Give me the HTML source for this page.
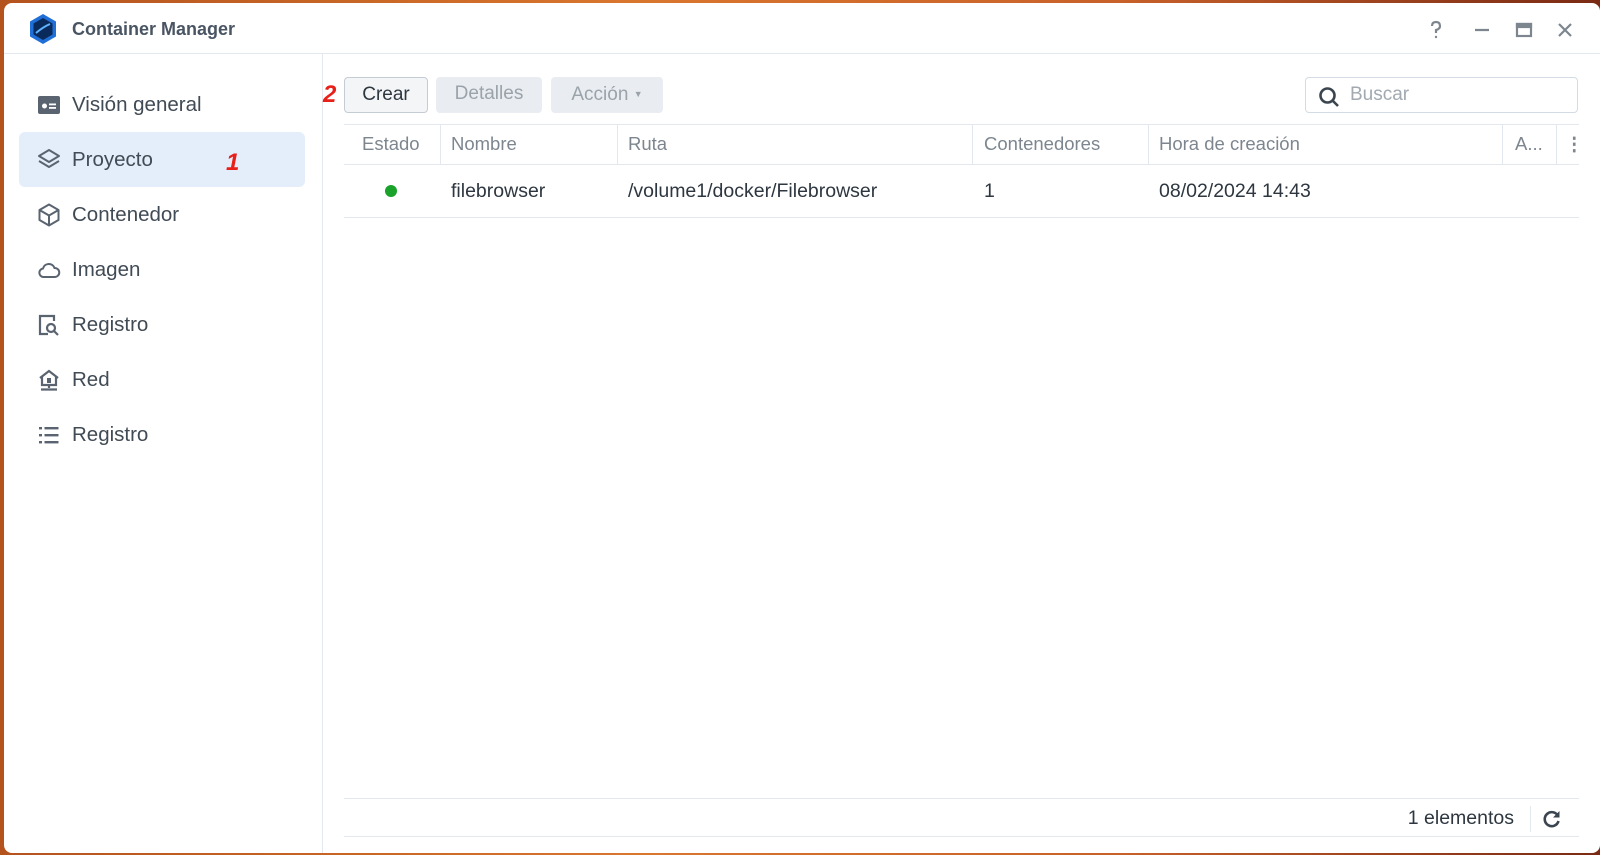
<!DOCTYPE html>
<html><head><meta charset="utf-8"><style>
*{box-sizing:border-box;margin:0;padding:0}
body{width:1600px;height:855px;overflow:hidden;background:linear-gradient(90deg,#b4531e,#d9762e 40%,#c8612a 70%,#7a2a14);font-family:"Liberation Sans",sans-serif;color:#414b55;position:relative}
.win{position:absolute;left:4px;top:3px;width:1596px;height:850px;background:#fff;border-radius:8px;overflow:hidden}
.title{position:absolute;left:68px;top:16px;font-size:18px;font-weight:bold;color:#4a5563}
.hl{position:absolute;left:0;right:0;top:50px;height:1px;background:#e3e8ee}
.side{position:absolute;left:318px;top:51px;bottom:0;width:1px;background:#e3e8ee}
.item{position:absolute;left:15px;width:286px;height:55px;font-size:20.5px;line-height:55px;padding-left:53px}
.item svg{position:absolute;left:18px;top:16px}
.sel{background:#e4eefa;border-radius:6px}
.btn{position:absolute;top:74px;height:36px;border-radius:4px;font-size:19px;line-height:34px;text-align:center}
.th{position:absolute;top:121px;height:40px;line-height:40px;font-size:18.5px;color:#7d868f}
.td{position:absolute;top:168px;height:40px;line-height:40px;font-size:19.5px;color:#2e3740}
.vl{position:absolute;top:121px;height:40px;width:1px;background:#e3e8ee}
.ln{position:absolute;left:340px;width:1235px;height:1px;background:#e3e8ee}
.red{position:absolute;color:#e8201a;font-style:italic;font-weight:bold;font-size:24px}
</style></head><body>
<div class="win">
<svg style="position:absolute;left:24px;top:10px" width="30" height="32" viewBox="0 0 30 32"><polygon points="15,1 28,8.5 28,23.5 15,31 2,23.5 2,8.5" fill="#1f6fd6"/><polygon points="15,5 24.5,10.5 24.5,21.5 15,27 5.5,21.5 5.5,10.5" fill="#0b2a5c"/><path d="M8 20 Q15 14 22 11" stroke="#5fb3ff" stroke-width="2" fill="none"/></svg>
<div class="title">Container Manager</div>
<svg style="position:absolute;left:1420px;top:16px" width="150" height="22" viewBox="0 0 150 22" fill="none" stroke="#7d868f" stroke-width="2.2"><path d="M8 7 Q8 3 12 3 Q16 3 16 7 Q16 10 12 11 L12 14"/><circle cx="12" cy="18" r="1.2" fill="#7d868f" stroke="none"/><path d="M51 11 H65"/><rect x="93" y="5" width="14" height="12" fill="none"/><rect x="93" y="5" width="14" height="3" fill="#7d868f"/><path d="M135 5 L147 17 M147 5 L135 17"/></svg>
<div class="hl"></div>
<div class="side"></div>

<div class="item" style="top:74px"><svg width="24" height="24" viewBox="0 0 24 24"><rect x="1" y="3" width="22" height="18" rx="2" fill="#5a6470"/><circle cx="7.5" cy="13" r="2.5" fill="#fff"/><rect x="12" y="10.5" width="7" height="1.8" fill="#fff"/><rect x="12" y="14" width="7" height="1.8" fill="#fff"/></svg>Visión general</div>
<div class="item sel" style="top:129px"><svg width="24" height="24" viewBox="0 0 24 24" fill="none" stroke="#5a6470" stroke-width="2" stroke-linejoin="round"><path d="M12 2 L22 8 L12 14 L2 8 Z"/><path d="M2 13 L12 19 L22 13"/></svg>Proyecto</div>
<div class="item" style="top:184px"><svg width="24" height="24" viewBox="0 0 24 24" fill="none" stroke="#5a6470" stroke-width="2" stroke-linejoin="round"><path d="M12 1.5 L21.5 7 V17 L12 22.5 L2.5 17 V7 Z"/><path d="M2.5 7 L12 12.5 L21.5 7 M12 12.5 V22.5"/></svg>Contenedor</div>
<div class="item" style="top:239px"><svg width="24" height="24" viewBox="0 0 24 24" fill="none" stroke="#5a6470" stroke-width="2"><path d="M6 19 H18 A4.5 4.5 0 0 0 17.5 10 A6 6 0 0 0 6 10.5 A4.3 4.3 0 0 0 6 19 Z"/></svg>Imagen</div>
<div class="item" style="top:294px"><svg width="24" height="24" viewBox="0 0 24 24" fill="none" stroke="#5a6470" stroke-width="2.2"><path d="M11 21 H3 V3 H17 V8"/><circle cx="14" cy="15" r="4"/><path d="M17 18 L21 22"/></svg>Registro</div>
<div class="item" style="top:349px"><svg width="24" height="24" viewBox="0 0 24 24" fill="none" stroke="#5a6470" stroke-width="2.2"><path d="M3 10 L12 3 L21 10 M5 9 V17 H19 V9"/><rect x="10" y="10" width="4" height="5" fill="#5a6470" stroke="none"/><path d="M12 17 V20 M4 21.5 H20"/></svg>Red</div>
<div class="item" style="top:404px"><svg width="24" height="24" viewBox="0 0 24 24" fill="#5a6470"><rect x="2" y="4" width="3" height="2.4"/><rect x="2" y="11" width="3" height="2.4"/><rect x="2" y="18" width="3" height="2.4"/><rect x="7.5" y="4" width="14" height="2.4"/><rect x="7.5" y="11" width="14" height="2.4"/><rect x="7.5" y="18" width="14" height="2.4"/></svg>Registro</div>
<div class="red" style="left:222px;top:146px">1</div>
<div class="red" style="left:319px;top:78px">2</div>

<div class="btn" style="left:340px;width:84px;border:1px solid #c5ccd4;background:#f3f5f7;color:#2e3740">Crear</div>
<div class="btn" style="left:432px;width:106px;background:#e9edf1;color:#9aa2aa">Detalles</div>
<div class="btn" style="left:547px;width:112px;background:#e9edf1;color:#9aa2aa">Acción <span style="font-size:9px;vertical-align:3px">▼</span></div>
<div class="btn" style="left:1301px;width:273px;border:1px solid #d3dbe4;background:#fff;text-align:left;padding-left:44px;color:#a2a9b1">Buscar</div>
<svg style="position:absolute;left:1314px;top:83px" width="22" height="22" viewBox="0 0 22 22" fill="none" stroke="#3b4550" stroke-width="2.6"><circle cx="9.5" cy="9.5" r="7"/><path d="M14.5 14.5 L20 20"/></svg>

<div class="ln" style="top:121px"></div>
<div class="ln" style="top:161px"></div>
<div class="ln" style="top:214px"></div>
<div class="vl" style="left:436px"></div><div class="vl" style="left:613px"></div><div class="vl" style="left:968px"></div><div class="vl" style="left:1144px"></div><div class="vl" style="left:1498px"></div><div class="vl" style="left:1552px"></div>
<div class="th" style="left:358px">Estado</div>
<div class="th" style="left:447px">Nombre</div>
<div class="th" style="left:624px">Ruta</div>
<div class="th" style="left:980px">Contenedores</div>
<div class="th" style="left:1155px">Hora de creación</div>
<div class="th" style="left:1511px">A...</div>
<div class="th" style="left:1561px;font-weight:bold">⋮</div>
<div style="position:absolute;left:381px;top:182px;width:12px;height:12px;border-radius:50%;background:#1aa32a"></div>
<div class="td" style="left:447px">filebrowser</div>
<div class="td" style="left:624px">/volume1/docker/Filebrowser</div>
<div class="td" style="left:980px">1</div>
<div class="td" style="left:1155px">08/02/2024 14:43</div>

<div class="ln" style="top:795px"></div>
<div class="ln" style="top:833px"></div>
<div style="position:absolute;right:86px;top:804px;font-size:19.5px;color:#2e3740">1 elementos</div>
<div style="position:absolute;left:1526px;top:803px;width:1px;height:26px;background:#e3e8ee"></div>
<svg style="position:absolute;left:1538px;top:806px" width="20" height="20" viewBox="0 0 20 20" fill="none" stroke="#3b4550" stroke-width="2.6"><path d="M16 7 A7 7 0 1 0 16.5 12"/><path d="M17.5 2 L17.5 8.5 L11 8.5 Z" fill="#3b4550" stroke="none"/></svg>
</div>
</body></html>
